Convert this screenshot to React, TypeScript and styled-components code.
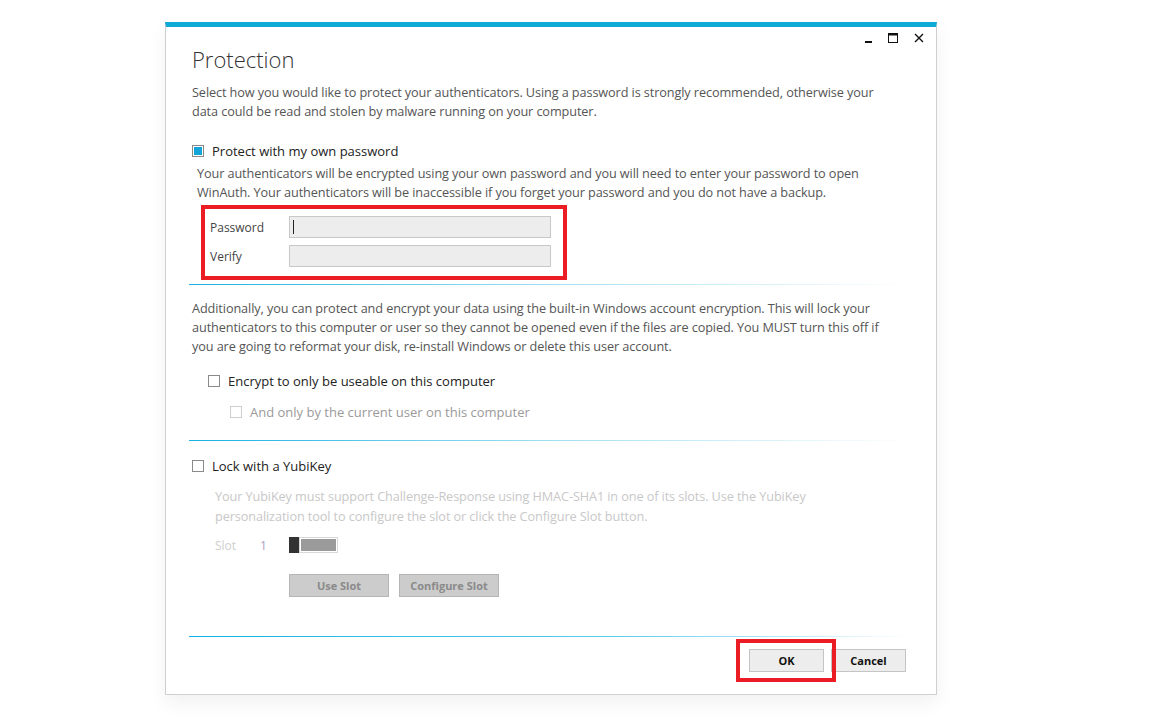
import React from 'react'
import styled, {createGlobalStyle} from 'styled-components'

const GlobalStyle = createGlobalStyle`
  html, body {
    margin: 0;
    padding: 0;
    background: #ffffff;
    font-family: "Open Sans", "Noto Sans", sans-serif;
  }
`

const Page = styled.div`
  width: 1151px;
  height: 726px;
  padding: 22px 0 0 165px;
  box-sizing: border-box;
`

const Window = styled.div`
  width: 772px;
  height: 673px;
  box-sizing: border-box;
  border: 1px solid #cfcfcf;
  border-top: 5px solid #0fa9d8;
  background: #ffffff;
  box-shadow: 0 8px 18px rgba(0, 0, 0, 0.06);
  display: flex;
  flex-direction: column;
`

const Header = styled.div`
  display: flex;
  justify-content: space-between;
  align-items: flex-start;
  padding: 0 12px 0 26px;
`

const Title = styled.h1`
  margin: 17px 0 0;
  font-size: 22px;
  font-weight: 300;
  color: #333;
  line-height: 30px;
`

const Controls = styled.div`
  display: flex;
  align-items: center;
  gap: 15px;
  padding-top: 5px;
  color: #111;
`

const Body = styled.div`
  display: flex;
  flex-direction: column;
  padding: 0 0 0 26px;
`

const Para = styled.p<{$indent?: number; $muted?: boolean}>`
  margin: 0;
  padding-left: ${({$indent}) => $indent || 0}px;
  font-size: 12.7px;
  line-height: ${({$muted}) => ($muted ? 20 : 19)}px;
  color: ${({$muted}) => ($muted ? '#c8c8c8' : '#555')};
  white-space: nowrap;
  letter-spacing: -0.1px;
`

const CheckRow = styled.label<{$indent?: number; $disabled?: boolean}>`
  display: flex;
  align-items: center;
  gap: 8px;
  padding-left: ${({$indent}) => $indent || 0}px;
  font-size: 13px;
  color: ${({$disabled}) => ($disabled ? '#9a9a9a' : '#222')};
  height: 20px;
`

const Box = styled.span<{$checked?: boolean; $disabled?: boolean}>`
  width: 10px;
  height: 10px;
  border: 1px solid ${({$disabled}) => ($disabled ? '#cfcfcf' : '#8a8a8a')};
  background: #fff;
  display: flex;
  align-items: center;
  justify-content: center;
  &::after {
    content: '';
    display: ${({$checked}) => ($checked ? 'block' : 'none')};
    width: 8px;
    height: 8px;
    background: #12a3d9;
  }
`

const Highlight = styled.div`
  margin: 3px 0 0 9px;
  width: 366px;
  height: 75px;
  box-sizing: border-box;
  border: 4px solid #ec1c24;
  padding: 7px 12px 0 5px;
  display: flex;
  flex-direction: column;
  gap: 7px;
`

const FieldRow = styled.div`
  display: flex;
  align-items: center;
`

const FieldLabel = styled.span`
  width: 79px;
  font-size: 12px;
  color: #444;
`

const TextInput = styled.div`
  width: 262px;
  height: 22px;
  box-sizing: border-box;
  border: 1px solid #c8c8c8;
  background: #ededed;
  display: flex;
  align-items: center;
  padding-left: 3px;
`

const Caret = styled.span`
  width: 1px;
  height: 14px;
  background: #222;
`

const Rule = styled.div<{$solid?: boolean}>`
  height: 1px;
  width: 720px;
  margin-left: -3px;
  flex-shrink: 0;
  background: ${({$solid}) =>
    $solid
      ? 'linear-gradient(to right, #0fb2e4 0%, #5ccbee 60%, rgba(255,255,255,0) 100%)'
      : 'linear-gradient(to right, #17b0e2 0%, #9fdff2 50%, rgba(255,255,255,0) 100%)'};
`

const Spacer = styled.div<{$h: number}>`
  height: ${({$h}) => $h}px;
  flex-shrink: 0;
`

const SlotRow = styled.div`
  display: flex;
  align-items: center;
  height: 16px;
  padding-left: 23px;
  font-size: 12px;
  color: #cfcfcf;
`

const SlotLabel = styled.span`
  width: 45px;
`

const SlotValue = styled.span`
  width: 29px;
  color: #ab9fbd;
`

const Track = styled.div`
  width: 49px;
  height: 16px;
  display: flex;
  align-items: stretch;
`

const Thumb = styled.div`
  width: 10px;
  background: #333;
`

const TrackFill = styled.div`
  flex: 1;
  border: 1px solid #d8d8d8;
  background: #9a9a9a;
  box-shadow: inset 0 0 0 1px #fff;
`

const ButtonRow = styled.div`
  display: flex;
  gap: 10px;
  padding-left: 97px;
`

const SlotButton = styled.button`
  width: 100px;
  height: 23px;
  border: 1px solid #b5b5b5;
  background: #cccccc;
  color: #8a8a8a;
  font-family: inherit;
  font-size: 11px;
  font-weight: 700;
  padding: 0;
`

const Footer = styled.div`
  display: flex;
  justify-content: flex-end;
  align-items: flex-start;
  gap: 7px;
  padding: 2px 30px 0 0;
`

const Outline = styled.div`
  position: relative;
  z-index: 1;
  border: 4px solid #ec1c24;
  padding: 6px 8px 6px 9px;
  margin-right: -12px;
  display: flex;
`

const DialogButton = styled.button<{$offset?: number}>`
  width: 75px;
  height: 23px;
  margin-top: ${({$offset}) => $offset || 0}px;
  border: 1px solid #c4c4c4;
  background: #ededed;
  color: #111;
  font-family: inherit;
  font-size: 11px;
  font-weight: 700;
  padding: 0;
`

const Minimize = () => (
  <svg width="8" height="12" viewBox="0 0 8 12">
    <rect x="0" y="9" width="7" height="2" fill="#111" />
  </svg>
)

const Maximize = () => (
  <svg width="11" height="11" viewBox="0 0 11 11">
    <rect x="0.5" y="0.5" width="9" height="9" fill="none" stroke="#111" />
    <rect x="0.5" y="0.5" width="9" height="2" fill="#111" />
  </svg>
)

const Close = () => (
  <svg width="10" height="10" viewBox="0 0 10 10">
    <path d="M1 1 L9 9 M9 1 L1 9" stroke="#111" strokeWidth="1.4" />
  </svg>
)

export default function App() {
  return (
    <>
      <GlobalStyle />
      <Page>
        <Window>
          <Header>
            <Title>Protection</Title>
            <Controls>
              <Minimize />
              <Maximize />
              <Close />
            </Controls>
          </Header>
          <Body>
            <Spacer $h={9} />
            <Para>Select how you would like to protect your authenticators. Using a password is strongly recommended, otherwise your</Para>
            <Para>data could be read and stolen by malware running on your computer.</Para>
            <Spacer $h={20} />
            <CheckRow>
              <Box $checked />
              Protect with my own password
            </CheckRow>
            <Spacer $h={3} />
            <Para $indent={5}>Your authenticators will be encrypted using your own password and you will need to enter your password to open</Para>
            <Para $indent={5}>WinAuth. Your authenticators will be inaccessible if you forget your password and you do not have a backup.</Para>
            <Highlight>
              <FieldRow>
                <FieldLabel>Password</FieldLabel>
                <TextInput>
                  <Caret />
                </TextInput>
              </FieldRow>
              <FieldRow>
                <FieldLabel>Verify</FieldLabel>
                <TextInput />
              </FieldRow>
            </Highlight>
            <Spacer $h={4} />
            <Rule />
            <Spacer $h={14} />
            <Para>Additionally, you can protect and encrypt your data using the built-in Windows account encryption. This will lock your</Para>
            <Para>authenticators to this computer or user so they cannot be opened even if the files are copied. You MUST turn this off if</Para>
            <Para>you are going to reformat your disk, re-install Windows or delete this user account.</Para>
            <Spacer $h={15} />
            <CheckRow $indent={16}>
              <Box />
              Encrypt to only be useable on this computer
            </CheckRow>
            <Spacer $h={11} />
            <CheckRow $indent={38} $disabled>
              <Box $disabled />
              And only by the current user on this computer
            </CheckRow>
            <Spacer $h={18} />
            <Rule />
            <Spacer $h={15} />
            <CheckRow>
              <Box />
              Lock with a YubiKey
            </CheckRow>
            <Spacer $h={10} />
            <Para $indent={23} $muted>Your YubiKey must support Challenge-Response using HMAC-SHA1 in one of its slots. Use the YubiKey</Para>
            <Para $indent={23} $muted>personalization tool to configure the slot or click the Configure Slot button.</Para>
            <Spacer $h={11} />
            <SlotRow>
              <SlotLabel>Slot</SlotLabel>
              <SlotValue>1</SlotValue>
              <Track>
                <Thumb />
                <TrackFill />
              </Track>
            </SlotRow>
            <Spacer $h={21} />
            <ButtonRow>
              <SlotButton>Use Slot</SlotButton>
              <SlotButton>Configure Slot</SlotButton>
            </ButtonRow>
            <Spacer $h={39} />
            <Rule $solid />
          </Body>
          <Footer>
            <Outline>
              <DialogButton>OK</DialogButton>
            </Outline>
            <DialogButton $offset={10}>Cancel</DialogButton>
          </Footer>
        </Window>
      </Page>
    </>
  )
}
